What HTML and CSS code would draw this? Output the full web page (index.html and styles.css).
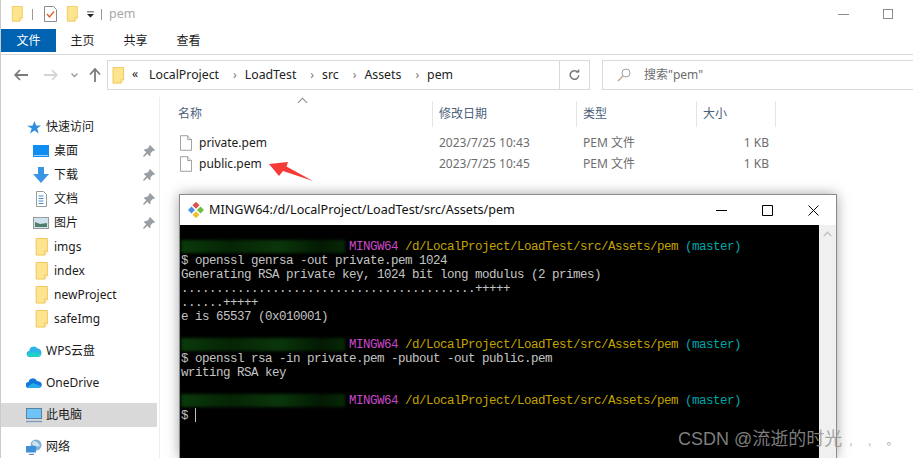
FILE: index.html
```html
<!DOCTYPE html>
<html lang="zh-CN">
<head>
<meta charset="utf-8">
<title>pem</title>
<link rel="stylesheet" href="styles.css">
</head>
<body>
<svg class="defs" width="0" height="0" aria-hidden="true">
  <symbol id="folder" viewBox="0 0 14 20">
    <path d="M.5.5h12.500v14.500l-3 4H.5z" fill="#fde58f" stroke="#eec44f"/>
    <path d="M10 19v-4.500h3.500" fill="#fff3c4" stroke="#eec44f"/>
  </symbol>
  <symbol id="pin" viewBox="0 0 12 12">
    <path d="M7 0l5 5-1 1-1-.3-2.500 2.500.2 2-1 1-2.400-2.400L1 12l-1-1 3.200-3.800L.9 4.900l1-1 2 .2L6.300 1.700 6 1z" fill="#9a9fa6"/>
  </symbol>
  <symbol id="file" viewBox="0 0 14 18">
    <path d="M.5.5h8.500l4.500 4.500v12.500H.5z" fill="#fff" stroke="#8e8e8e"/>
    <path d="M9 .5v4.500h4.500" fill="#f2f2f2" stroke="#8e8e8e"/>
  </symbol>
</svg>

<div class="explorer">
  <header class="titlebar">
    <svg class="ic-folder"><use href="#folder"/></svg>
    <i class="vsep"></i>
    <svg class="ic-check" viewBox="0 0 13 16"><path d="M.5.5h9l3 3v12H.5z" fill="#fff" stroke="#8c8c8c"/><path d="M3 8l2.500 3L10 5.500" fill="none" stroke="#e0602a" stroke-width="1.400"/></svg>
    <svg class="ic-folder second"><use href="#folder"/></svg>
    <svg class="ic-drop" viewBox="0 0 8 7"><path d="M0 0h8v1H0zM0 3h8L4 7z" fill="#222"/></svg>
    <i class="vsep"></i>
    <span class="title-text">pem</span>
    <span class="win-buttons">
      <i class="win-min"></i>
      <i class="win-max"></i>
    </span>
  </header>

  <nav class="ribbon">
    <span class="tab active">文件</span>
    <span class="tab">主页</span>
    <span class="tab">共享</span>
    <span class="tab">查看</span>
  </nav>

  <div class="addressrow">
    <div class="navbtns">
      <svg width="14" height="12" viewBox="0 0 14 12"><path d="M6 1L1.200 6 6 11M1.500 6H14" fill="none" stroke="#7a7a7a" stroke-width="1.800"/></svg>
      <svg width="14" height="12" viewBox="0 0 14 12"><path d="M8 1l4.800 5L8 11M12.500 6H0" fill="none" stroke="#d4d4d4" stroke-width="1.800"/></svg>
      <svg width="7" height="5" viewBox="0 0 7 5"><path d="M.5.500l3 3 3-3" fill="none" stroke="#9a9a9a" stroke-width="1.400"/></svg>
      <svg width="12" height="14" viewBox="0 0 12 14"><path d="M1 6.500L6 1l5 5.500M6 1.500V14" fill="none" stroke="#7a7a7a" stroke-width="1.800"/></svg>
    </div>
    <div class="addressbox">
      <svg class="ic-folder addr"><use href="#folder"/></svg>
      <span class="chev-double">«</span>
      <span class="crumb">LocalProject</span><b class="crumb-sep">›</b>
      <span class="crumb">LoadTest</span><b class="crumb-sep">›</b>
      <span class="crumb">src</span><b class="crumb-sep">›</b>
      <span class="crumb">Assets</span><b class="crumb-sep">›</b>
      <span class="crumb">pem</span>
      <span class="addr-end">
        <svg width="11" height="12" viewBox="0 0 11 12"><path d="M8.800 3.200a4.300 4.300 0 1 0 1 3" fill="none" stroke="#777" stroke-width="1.500"/><path d="M6.500 3.600h3.800V0z" fill="#777"/></svg>
      </span>
    </div>
    <div class="searchbox">
      <svg width="14" height="14" viewBox="0 0 14 14"><circle cx="9" cy="5" r="4" fill="none" stroke="#9aa3ad"/><path d="M6 8l-5 5" stroke="#c4a079" stroke-width="1.200"/></svg>
      <span>搜索"pem"</span>
    </div>
  </div>

  <div class="main">
    <aside class="sidebar">
      <div class="nav-row head">
        <svg width="14" height="13" viewBox="0 0 14 13"><path d="M7.500 0l1.600 4.400H14l-3.800 3 1.500 5-4.200-3-4.500 3 1.700-5L0 4.800h5.400z" fill="#2f8fdc"/></svg>
        <span>快速访问</span>
      </div>
      <div class="nav-row sub">
        <svg width="16" height="12" viewBox="0 0 16 12"><rect width="16" height="12" fill="#0f8df0"/><path d="M1 10.500h14" stroke="#9cd0f8"/></svg>
        <span>桌面</span><svg class="pin"><use href="#pin"/></svg>
      </div>
      <div class="nav-row sub">
        <svg width="16" height="16" viewBox="0 0 16 16"><path d="M5 0h6v7h5l-8 9-8-9h5z" fill="#3a94e4"/></svg>
        <span>下载</span><svg class="pin"><use href="#pin"/></svg>
      </div>
      <div class="nav-row sub">
        <svg width="16" height="16" viewBox="0 0 16 16"><path d="M3.500.500h7l3 3v12h-10z" fill="#fff" stroke="#999"/><path d="M5.500 5h5M5.500 7.500h5M5.500 10h5M5.500 12.500h5" stroke="#4a90d0"/></svg>
        <span>文档</span><svg class="pin"><use href="#pin"/></svg>
      </div>
      <div class="nav-row sub">
        <svg width="16" height="12" viewBox="0 0 16 12"><rect x=".5" y=".5" width="15" height="11" fill="#cfe3ee" stroke="#999"/><path d="M2 5l5 2 7-1v4H2z" fill="#4f7f6a"/></svg>
        <span>图片</span><svg class="pin"><use href="#pin"/></svg>
      </div>
      <div class="nav-row sub folder"><svg class="ic-folder"><use href="#folder"/></svg><span>imgs</span></div>
      <div class="nav-row sub folder"><svg class="ic-folder"><use href="#folder"/></svg><span>index</span></div>
      <div class="nav-row sub folder"><svg class="ic-folder"><use href="#folder"/></svg><span>newProject</span></div>
      <div class="nav-row sub folder"><svg class="ic-folder"><use href="#folder"/></svg><span>safeImg</span></div>
      <div class="nav-row head gap">
        <svg width="15" height="12" viewBox="0 0 15 12"><path d="M3.500 12a3 3 0 0 1-.7-6A4.500 4.500 0 0 1 11 3.500 4.300 4.300 0 0 1 11.500 12z" fill="#2cb4e8"/><path d="M1 9c3-2 9-2 13 0a3 3 0 0 1-2.500 3h-8A3 3 0 0 1 1 9z" fill="#21d0c8"/></svg>
        <span>WPS云盘</span>
      </div>
      <div class="nav-row head gap">
        <svg width="16" height="10" viewBox="0 0 16 10"><path d="M3 10a3 3 0 0 1-.5-6A4.500 4.500 0 0 1 11 3a3.500 3.500 0 0 1 2 .5 3.300 3.300 0 0 1 0 6.500z" fill="#0f78d4"/><path d="M1 9l6-4 8 3-1.500 2H3z" fill="#28a8ea"/></svg>
        <span>OneDrive</span>
      </div>
      <div class="nav-row head gap selected">
        <svg width="16" height="15" viewBox="0 0 16 15"><rect x=".5" y=".5" width="15" height="10" fill="#6ec3f7" stroke="#5a7fa0"/><path d="M0 13.500h16" stroke="#7e9cc0" stroke-width="1.400"/></svg>
        <span>此电脑</span>
      </div>
      <div class="nav-row head gap">
        <svg width="16" height="16" viewBox="0 0 16 16"><circle cx="10" cy="6" r="5.500" fill="#7fb0d8"/><path d="M7 2c3 0 6 2 7 5-3 1-6 0-8-2z" fill="#cfe2ef"/><rect x="0" y="7" width="10" height="6.500" fill="#3d8fd8"/><path d="M3 15.500h5" stroke="#6d8db0" stroke-width="1.400"/></svg>
        <span>网络</span>
      </div>
    </aside>

    <section class="files">
      <i class="sort-caret"></i>
      <div class="file-grid col-head">
        <span class="cell name">名称</span>
        <span class="cell">修改日期</span>
        <span class="cell">类型</span>
        <span class="cell">大小</span>
      </div>
      <div class="file-grid file-row">
        <span class="cell name"><svg class="ic-file"><use href="#file"/></svg><b>private.pem</b></span>
        <span class="cell">2023/7/25 10:43</span>
        <span class="cell">PEM 文件</span>
        <span class="cell size">1 KB</span>
      </div>
      <div class="file-grid file-row">
        <span class="cell name"><svg class="ic-file"><use href="#file"/></svg><b>public.pem</b></span>
        <span class="cell">2023/7/25 10:45</span>
        <span class="cell">PEM 文件</span>
        <span class="cell size">1 KB</span>
      </div>
    </section>
  </div>
</div>

<svg class="red-arrow" width="46" height="22" viewBox="0 0 46 22"><path d="M0 2L19 0l-1.500 4.500L44 19 14 9l-4 5z" fill="#f53b35"/></svg>

<div class="terminal">
  <header class="term-title">
    <svg width="16" height="16" viewBox="0 0 16 16">
      <rect x="5.500" y=".8" width="5" height="5" transform="rotate(45 8 3.300)" fill="#e0524a"/>
      <rect x="1" y="5.500" width="5" height="5" transform="rotate(45 3.500 8)" fill="#4a90e2"/>
      <rect x="10" y="5.500" width="5" height="5" transform="rotate(45 12.500 8)" fill="#6cbf3f"/>
      <rect x="5.500" y="10.200" width="5" height="5" transform="rotate(45 8 12.700)" fill="#f0c030"/>
    </svg>
    <span class="term-name">MINGW64:/d/LocalProject/LoadTest/src/Assets/pem</span>
    <span class="term-btns">
      <svg width="11" height="11" viewBox="0 0 11 11"><path d="M0 5.500h11" stroke="#000"/></svg>
      <svg width="11" height="11" viewBox="0 0 11 11"><path d="M.5.500h10v10H.5z" fill="none" stroke="#000"/></svg>
      <svg width="11" height="11" viewBox="0 0 11 11"><path d="M.5.500l10 10M10.500.500l-10 10" stroke="#000"/></svg>
    </span>
  </header>
  <div class="term-body">
    <div class="console">
      <div class="ln"><span class="redact"></span><span class="mg">MINGW64</span> <span class="pa">/d/LocalProject/LoadTest/src/Assets/pem</span> <span class="br">(master)</span></div>
      <div class="ln">$ openssl genrsa -out private.pem 1024</div>
      <div class="ln">Generating RSA private key, 1024 bit long modulus (2 primes)</div>
      <div class="ln">..........................................+++++</div>
      <div class="ln">......+++++</div>
      <div class="ln">e is 65537 (0x010001)</div>
      <div class="ln">&nbsp;</div>
      <div class="ln"><span class="redact"></span><span class="mg">MINGW64</span> <span class="pa">/d/LocalProject/LoadTest/src/Assets/pem</span> <span class="br">(master)</span></div>
      <div class="ln">$ openssl rsa -in private.pem -pubout -out public.pem</div>
      <div class="ln">writing RSA key</div>
      <div class="ln">&nbsp;</div>
      <div class="ln"><span class="redact"></span><span class="mg">MINGW64</span> <span class="pa">/d/LocalProject/LoadTest/src/Assets/pem</span> <span class="br">(master)</span></div>
      <div class="ln">$ <i class="cursor"></i></div>
    </div>
    <div class="scrollbar"><svg width="9" height="6" viewBox="0 0 9 6"><path d="M.8 5l3.700-3.700L8.200 5" fill="none" stroke="#c4c4c4" stroke-width="1.600"/></svg></div>
  </div>
</div>

<div class="watermark">CSDN @流逝的时光<span class="wm-tail">, , 。</span></div>
</body>
</html>
```
FILE: styles.css
```css
* { box-sizing: border-box; }
html, body { margin: 0; padding: 0; }
body {
  width: 913px;
  height: 458px;
  overflow: hidden;
  position: relative;
  background: #fff;
  color: #1b1b1b;
  font: 12px/16px "Noto Sans", "Noto Sans CJK SC", sans-serif;
}
.defs { position: absolute; }
i { font-style: normal; }

.explorer {
  width: 913px;
  height: 458px;
  display: flex;
  flex-direction: column;
  border-left: 1px solid #c8ccd0;
}

/* title bar */
.titlebar {
  height: 28px;
  display: flex;
  align-items: center;
  padding-left: 10px;
}
.ic-folder { width: 14px; height: 20px; flex: none; }
.titlebar .ic-folder { height: 16px; width: 13px; }
.titlebar .ic-folder.second { margin-left: 9px; }
.vsep { width: 1px; height: 11px; background: #9a9a9a; margin: 0 11px 0 8px; }
.ic-check { width: 13px; height: 16px; }
.ic-drop { width: 7px; height: 7px; margin-left: 8px; }
.titlebar .ic-drop + .vsep { margin-left: 7px; margin-right: 7px; }
.title-text { color: #a8a8a8; font-size: 12.500px; }
.win-buttons { margin-left: auto; display: flex; align-items: center; padding-right: 20px; gap: 34px; }
.win-min { width: 11px; height: 1px; background: #8c8c8c; }
.win-max { width: 10px; height: 10px; border: 1px solid #8c8c8c; }

/* ribbon */
.ribbon {
  height: 27px;
  display: flex;
  border-bottom: 1px solid #dadada;
  padding-top: 1px;
}
.tab { width: 53px; height: 23px; text-align: center; line-height: 23px; font-size: 12px; }
.tab.active { width: 55px; background: #0063b1; color: #fff; }

/* address */
.addressrow {
  height: 42px;
  display: flex;
  align-items: center;
  padding-bottom: 2px;
}
.navbtns { width: 106px; display: flex; align-items: center; padding-left: 13px; }
.navbtns svg:nth-child(2) { margin-left: 16px; }
.navbtns svg:nth-child(3) { margin-left: 13px; }
.navbtns svg:nth-child(4) { margin-left: 11px; }
.addressbox {
  width: 483px;
  height: 30px;
  border: 1px solid #d9d9d9;
  display: flex;
  align-items: center;
  padding-left: 4px;
}
.ic-folder.addr { width: 13px; height: 17px; }
.chev-double { margin-left: 7px; width: 14px; font-size: 12px; line-height: 12px; margin-top: -3px; }
.crumb { margin-left: 3px; color: #222; font-size: 12.300px; }
.crumb-sep { font-weight: 400; color: #777; margin: 0 5px 0 14px; font-size: 12px; }
.addr-end {
  margin-left: auto;
  width: 30px;
  height: 28px;
  border-left: 1px solid #d9d9d9;
  display: flex;
  align-items: center;
  justify-content: center;
}
.searchbox {
  margin-left: 12px;
  flex: 1;
  height: 30px;
  border: 1px solid #d9d9d9;
  border-right: 0;
  display: flex;
  align-items: center;
  padding-left: 14px;
  gap: 13px;
  color: #6d6d6d;
}

/* main */
.main { flex: 1; display: flex; min-height: 0; }
.sidebar {
  width: 159px;
  border-right: 1px solid #eeeeee;
  padding-top: 18px;
  flex: none;
}
.nav-row {
  height: 24px;
  display: flex;
  align-items: center;
  position: relative;
  padding-left: 26px;
  white-space: nowrap;
}
.nav-row.head > svg:first-child { width: 16px; margin-right: 4px; flex: none; }
.nav-row.head { padding-left: 25px; }
.nav-row.sub { padding-left: 32px; }
.nav-row.sub > svg:first-child { width: 16px; margin-right: 5px; flex: none; }
.nav-row.folder { padding-left: 34px; }
.nav-row.folder > svg:first-child { width: 14px; height: 18px; margin-right: 5px; }
.nav-row.gap { margin-top: 8px; }
.nav-row.selected { background: #d9d9d9; margin-right: 2px; }
.pin { position: absolute; left: 142px; top: 6px; width: 12px; height: 12px; }

.files { flex: 1; position: relative; }
.sort-caret {
  position: absolute;
  left: 139px;
  top: 2px;
  width: 7px;
  height: 7px;
  border-left: 1px solid #8a8a8a;
  border-top: 1px solid #8a8a8a;
  transform: rotate(45deg);
}
.file-grid {
  display: grid;
  grid-template-columns: 272px 144px 120px 80px;
  align-items: center;
}
.col-head {
  height: 26px;
  margin-top: 4px;
  margin-bottom: 5px;
  color: #4c607a;
}
.col-head .cell { height: 26px; line-height: 26px; padding-left: 6px; border-left: 1px solid #e5e5e5; }
.col-head .cell.name { border-left: 0; padding-left: 18px; }
.col-head .cell:last-child { border-right: 1px solid #e5e5e5; }
.file-row { height: 21px; color: #6d6d6d; }
.file-row .cell { padding-left: 7px; }
.file-row .cell.name { display: flex; align-items: center; padding-left: 20px; }
.file-row .cell.size { text-align: right; padding-right: 7px; }
.file-row b { font-weight: 400; color: #1b1b1b; margin-left: 7px; }
.ic-file { width: 12px; height: 16px; flex: none; }

.red-arrow { position: absolute; left: 269px; top: 162px; }

/* terminal */
.terminal {
  position: absolute;
  left: 179px;
  top: 194px;
  width: 658px;
  height: 264px;
  background: #fff;
  border: 1px solid #8a8a8a;
  border-bottom: 0;
  box-shadow: 0 0 12px rgba(0, 0, 0, .35);
  display: flex;
  flex-direction: column;
}
.term-title {
  height: 30px;
  display: flex;
  align-items: center;
  padding-left: 8px;
  flex: none;
}
.term-name { margin-left: 5px; font-size: 12.600px; color: #111; }
.term-btns { margin-left: auto; display: flex; gap: 35px; padding-right: 17px; align-items: center; }
.term-body { flex: 1; display: flex; min-height: 0; }
.console {
  flex: 1;
  background: #000;
  color: #c4c4c4;
  font: 12.500px/14px "Liberation Mono", monospace;
  letter-spacing: -.5px;
  padding: 15px 0 0 1px;
  overflow: hidden;
}
.ln { height: 14px; white-space: pre; }
.redact {
  display: inline-block;
  width: 164px;
  height: 13px;
  margin-right: 4px;
  vertical-align: -3px;
  background: linear-gradient(90deg, #0a3a0a, #052405 30%, #0a360a 60%, #031a03 85%, #072807);
  filter: blur(1.500px);
}
.mg { color: #c848c8; }
.pa { color: #c4a400; }
.br { color: #00a8a8; }
.cursor { display: inline-block; width: 1px; height: 14px; background: #c0c0c0; vertical-align: -3px; }
.scrollbar {
  width: 17px;
  background: #f0f0f0;
  flex: none;
  display: flex;
  justify-content: center;
  padding-top: 6px;
  align-items: flex-start;
}
.scrollbar svg { flex: none; }

.watermark {
  position: absolute;
  left: 678px;
  top: 427px;
  font: 18px/24px "Liberation Sans", "Noto Sans CJK SC", sans-serif;
  color: rgba(150, 150, 150, .85);
  white-space: pre;
}
.wm-tail { margin-left: 7px; font-size: 12px; letter-spacing: 6px; }
```
